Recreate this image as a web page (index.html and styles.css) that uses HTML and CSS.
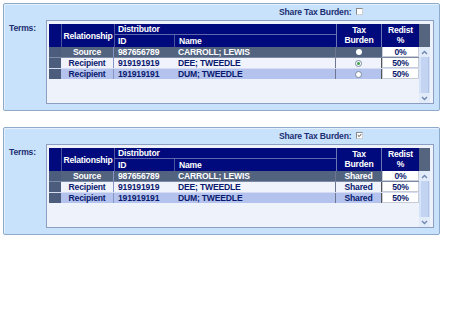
FILE: index.html
```html
<!DOCTYPE html>
<html>
<head>
<meta charset="utf-8">
<link rel="stylesheet" href="styles.css">
</head>
<body>
<div class="page">

  <section class="panel">
    <div class="share"><span class="share-label">Share Tax Burden:</span><span class="checkbox"></span></div>
    <div class="terms">
      <div class="terms-label">Terms:</div>
      <div class="box">
        <div class="head">
          <div class="h sel"></div>
          <div class="h rel">Relationship</div>
          <div class="h dist">Distributor</div>
          <div class="h idh">ID</div>
          <div class="h nameh">Name</div>
          <div class="h tax">Tax<br>Burden</div>
          <div class="h redist">Redist<br>%</div>
          <div class="h scrollhead"></div>
        </div>
        <div class="body">
          <div class="rows">
            <div class="row src">
              <div class="c sel"></div>
              <div class="c relc">Source</div>
              <div class="c idc">987656789</div>
              <div class="c namec">CARROLL; LEWIS</div>
              <div class="c taxc"><span class="dot"></span></div>
              <div class="c redc"><span class="inp">0%</span></div>
            </div>
            <div class="row r1">
              <div class="c sel"></div>
              <div class="c relc">Recipient</div>
              <div class="c idc">919191919</div>
              <div class="c namec">DEE; TWEEDLE</div>
              <div class="c taxc"><span class="radio on"></span></div>
              <div class="c redc"><span class="inp">50%</span></div>
            </div>
            <div class="row r2">
              <div class="c sel"></div>
              <div class="c relc">Recipient</div>
              <div class="c idc">191919191</div>
              <div class="c namec">DUM; TWEEDLE</div>
              <div class="c taxc"><span class="radio"></span></div>
              <div class="c redc"><span class="inp">50%</span></div>
            </div>
          </div>
          <div class="scrollbar">
            <span class="arrow"><svg width="7" height="5" viewBox="0 0 7 5"><path d="M1 4 L3.5 1.5 L6 4" fill="none" stroke="#6f86b0" stroke-width="1.4"/></svg></span>
            <span class="thumb"></span>
            <span class="arrow"><svg width="7" height="5" viewBox="0 0 7 5"><path d="M1 1 L3.5 3.5 L6 1" fill="none" stroke="#6f86b0" stroke-width="1.4"/></svg></span>
          </div>
        </div>
      </div>
    </div>
  </section>

  <section class="panel">
    <div class="share"><span class="share-label">Share Tax Burden:</span><span class="checkbox checked"><svg width="7" height="7" viewBox="0 0 7 7"><path d="M1 3 L3 5 L6 1.5" fill="none" stroke="#333" stroke-width="1.3"/></svg></span></div>
    <div class="terms">
      <div class="terms-label">Terms:</div>
      <div class="box">
        <div class="head">
          <div class="h sel"></div>
          <div class="h rel">Relationship</div>
          <div class="h dist">Distributor</div>
          <div class="h idh">ID</div>
          <div class="h nameh">Name</div>
          <div class="h tax">Tax<br>Burden</div>
          <div class="h redist">Redist<br>%</div>
          <div class="h scrollhead"></div>
        </div>
        <div class="body">
          <div class="rows">
            <div class="row src">
              <div class="c sel"></div>
              <div class="c relc">Source</div>
              <div class="c idc">987656789</div>
              <div class="c namec">CARROLL; LEWIS</div>
              <div class="c taxc">Shared</div>
              <div class="c redc"><span class="inp">0%</span></div>
            </div>
            <div class="row r1">
              <div class="c sel"></div>
              <div class="c relc">Recipient</div>
              <div class="c idc">919191919</div>
              <div class="c namec">DEE; TWEEDLE</div>
              <div class="c taxc">Shared</div>
              <div class="c redc"><span class="inp">50%</span></div>
            </div>
            <div class="row r2">
              <div class="c sel"></div>
              <div class="c relc">Recipient</div>
              <div class="c idc">191919191</div>
              <div class="c namec">DUM; TWEEDLE</div>
              <div class="c taxc">Shared</div>
              <div class="c redc"><span class="inp">50%</span></div>
            </div>
          </div>
          <div class="scrollbar">
            <span class="arrow"><svg width="7" height="5" viewBox="0 0 7 5"><path d="M1 4 L3.5 1.5 L6 4" fill="none" stroke="#6f86b0" stroke-width="1.4"/></svg></span>
            <span class="thumb"></span>
            <span class="arrow"><svg width="7" height="5" viewBox="0 0 7 5"><path d="M1 1 L3.5 3.5 L6 1" fill="none" stroke="#6f86b0" stroke-width="1.4"/></svg></span>
          </div>
        </div>
      </div>
    </div>
  </section>

</div>
</body>
</html>
```

FILE: styles.css
```css
* { box-sizing: border-box; }
html, body { margin: 0; padding: 0; background: #ffffff; }
body {
  font-family: "Liberation Sans", Arial, sans-serif;
  font-size: 8.6px;
  letter-spacing: -0.2px;
  font-weight: bold;
  color: #0a1a6e;
}
.page {
  padding: 3px 0 0 3px;
  display: flex;
  flex-direction: column;
  gap: 16px;
}
.panel {
  width: 437px;
  height: 108px;
  background: #c9e2fb;
  border: 1px solid #8eaacb;
  border-radius: 2px;
  box-shadow: inset 1px 1px 0 #e4f0fd;
  padding: 0;
}
.share {
  height: 14px;
  display: flex;
  align-items: center;
  padding-left: 275px;
  padding-top: 1px;
  color: #1c2f73;
}
.share-label { line-height: 10px; }
.checkbox {
  display: inline-flex;
  align-items: center;
  justify-content: center;
  width: 7px;
  height: 7px;
  margin-left: 5px;
  background: #ffffff;
  border: 1px solid #8a8a8a;
  border-right-color: #d0d0d0;
  border-bottom-color: #d0d0d0;
}
.checkbox svg { display: block; }
.terms {
  display: flex;
  margin-top: 2px;
}
.terms-label {
  width: 42px;
  padding: 3px 0 0 5px;
  color: #1c2f73;
}
.box {
  width: 388px;
  height: 84px;
  background: #eef2fb;
  border: 1px solid #8c9fc2;
  padding: 3px 3px 0 2px;
}
.head {
  display: grid;
  grid-template-columns: 12px 53px 60px 162px 45px 38px 11px;
  grid-template-rows: 11px 12px;
  width: 381px;
  background: #000a7c;
  color: #ffffff;
}
.h {
  background: #000a7c;
  line-height: 10px;
}
.head .sel { grid-column: 1; grid-row: 1 / 3; }
.rel {
  grid-column: 2; grid-row: 1 / 3;
  display: flex; align-items: center; justify-content: center;
  border-left: 1px solid #4a56a0;
}
.dist {
  grid-column: 3 / 5; grid-row: 1;
  padding-left: 3px;
  border-left: 1px solid #4a56a0;
  border-bottom: 1px solid #5d68ad;
}
.idh {
  grid-column: 3; grid-row: 2;
  padding: 1px 0 0 3px;
  border-left: 1px solid #4a56a0;
}
.nameh {
  grid-column: 4; grid-row: 2;
  padding: 1px 0 0 4px;
  border-left: 1px solid #4a56a0;
}
.tax {
  grid-column: 5; grid-row: 1 / 3;
  text-align: center;
  padding-top: 1px;
  border-left: 1px solid #6b75b2;
}
.redist {
  grid-column: 6; grid-row: 1 / 3;
  text-align: center;
  padding-top: 1px;
  border-left: 1px solid #6b75b2;
}
.scrollhead {
  grid-column: 7; grid-row: 1 / 3;
  background: #55657f;
}
.body {
  display: flex;
  height: 56px;
}
.rows {
  width: 370px;
}
.row {
  display: grid;
  grid-template-columns: 12px 53px 60px 162px 45px 38px;
  height: 11px;
  line-height: 10px;
  border-bottom: 1px solid #d6dcf2;
}
.row .c { overflow: hidden; white-space: nowrap; }
.row .sel { background: #4b5c7c; }
.relc { text-align: center; border-right: 1px solid #8794c6; }
.idc { padding-left: 4px; }
.namec { padding-left: 4px; border-right: 1px solid #6d7590; }
.taxc { display: flex; align-items: center; justify-content: center; }
.redc { padding-left: 1px; }
.src { background: #52637f; color: #ffffff; border-bottom-color: #7d8aa6; }
.r1 { background: #f1f3fc; color: #0a1a6e; }
.r2 { background: #b3c3ee; color: #0a1a6e; border-bottom: 0; height: 10px; }
.r1 .redc, .r2 .redc { border-left: 1px solid #555; padding-left: 0; }
.inp {
  display: block;
  height: 10px;
  width: 37px;
  background: #ffffff;
  border: 1px solid #c6cbd6;
  border-top: 0;
  color: #0a1a6e;
  text-align: center;
  line-height: 10px;
}
.dot {
  width: 6px; height: 6px;
  border-radius: 50%;
  background: #ffffff;
}
.radio {
  width: 7px; height: 7px;
  border-radius: 50%;
  background: #ffffff;
  border: 1px solid #7a8aa0;
  display: flex; align-items: center; justify-content: center;
}
.radio.on::after {
  content: "";
  width: 3px; height: 3px;
  border-radius: 50%;
  background: #3aa04a;
}
.scrollbar {
  width: 11px;
  height: 56px;
  background: #d3e1f8;
  display: flex;
  flex-direction: column;
  align-items: center;
}
.arrow {
  width: 11px;
  height: 10px;
  display: flex;
  align-items: center;
  justify-content: center;
  background: #e2ebfa;
}
.thumb {
  flex: 1;
  width: 9px;
  background: #c3d4f2;
  border-left: 1px solid #d8e4f8;
  border-right: 1px solid #b2c4e6;
}
```
